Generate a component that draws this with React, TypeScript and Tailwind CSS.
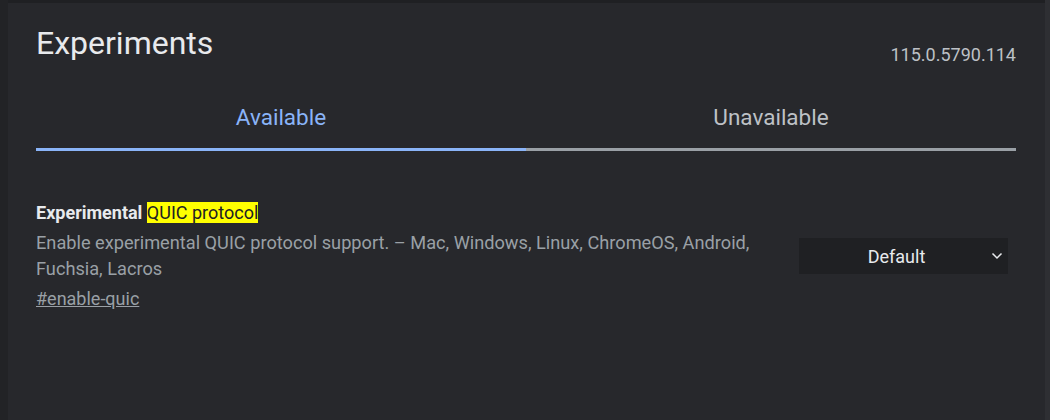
import React from "react";

export default function App() {
  return (
    <div
      className="w-[1050px] h-[420px] flex bg-[#27282c] overflow-hidden"
      style={{ fontFamily: "Roboto, 'Liberation Sans', sans-serif" }}
    >
      <div className="w-[8px] h-full bg-[#222326]" />
      <div className="flex-1 flex flex-col">
        <div className="h-[3px] bg-[#1f2023]" />
        <div className="flex-1 pl-[28px] pr-[29px]">
          <div className="flex items-start justify-between pt-[20px]">
            <h1 className="text-[32px] leading-[40px] text-[#e8eaed] font-normal">Experiments</h1>
            <div className="text-[18px] leading-[24px] text-[#bdc1c6] mt-[20px]">115.0.5790.114</div>
          </div>
          <div className="flex mt-[36px]">
            <div className="flex-1 flex flex-col">
              <div className="text-[22.5px] leading-[28px] text-[#8ab4f8] text-center pb-[17px]">Available</div>
              <div className="h-[3px] bg-[#8ab4f8]" />
            </div>
            <div className="flex-1 flex flex-col">
              <div className="text-[22.5px] leading-[28px] text-[#bdc1c6] text-center pb-[17px]">Unavailable</div>
              <div className="h-[3px] bg-[#9aa0a6]" />
            </div>
          </div>
          <div className="flex items-start justify-between mt-[50px]">
            <div className="flex flex-col">
              <div className="text-[18px] leading-[24px] font-bold text-[#e8eaed]">
                Experimental <span className="bg-[#ffff00] text-[#202124] font-normal">QUIC protocol</span>
              </div>
              <div className="text-[18.2px] leading-[26px] text-[#9aa0a6] mt-[5px] w-[760px]">
                Enable experimental QUIC protocol support. – Mac, Windows, Linux, ChromeOS, Android, Fuchsia, Lacros
              </div>
              <a className="text-[18px] leading-[26px] text-[#9aa0a6] underline mt-[4px]">#enable-quic</a>
            </div>
            <div className="w-[209px] h-[36px] bg-[#1f2023] relative flex items-center justify-center pr-[14px] mr-[8px] mt-[37px]">
              <span className="text-[18px] text-[#e8eaed]">Default</span>
              <svg className="absolute right-[4px] top-[12px]" width="14" height="12" viewBox="0 0 14 12" fill="none">
                <path d="M2.5 3.5 L7 8 L11.5 3.5" stroke="#e8eaed" strokeWidth="1.5" />
              </svg>
            </div>
          </div>
        </div>
      </div>
      <div className="w-[5px] h-full bg-[#2e2f33]" />
    </div>
  );
}
